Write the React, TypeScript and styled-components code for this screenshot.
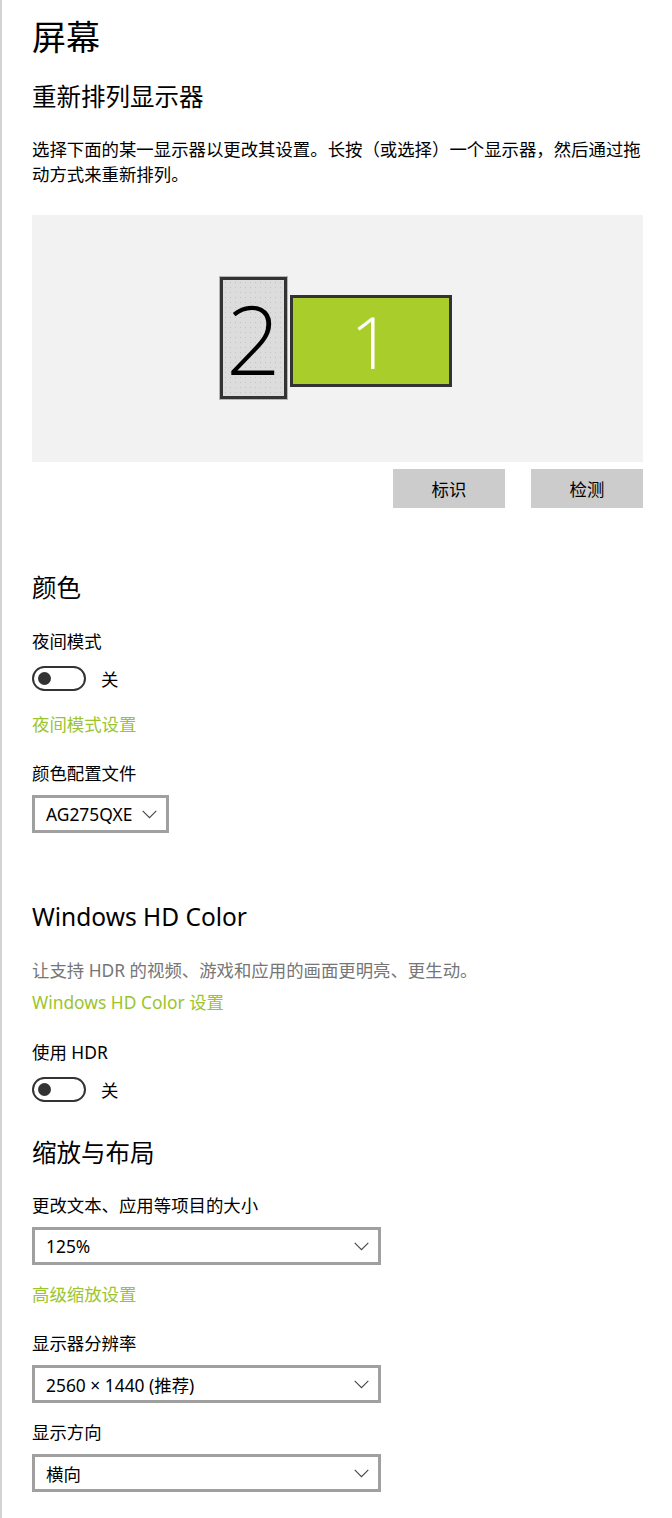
import React from 'react';
import styled, {createGlobalStyle} from 'styled-components';

const GlobalStyle = createGlobalStyle`
    html, body {
        margin: 0;
        padding: 0;
        background: #ffffff;
    }
    body {
        font-family: "Segoe UI", "Noto Sans", "Noto Sans CJK SC", sans-serif;
        color: #000;
    }
`;

const Page = styled.div`
    box-sizing: border-box;
    width: 672px;
    min-height: 1518px;
    border-left: 2px solid #d4d4d4;
    padding: 14px 0 0 30px;
`;

const Title = styled.h1`
    margin: 0;
    font-size: 34px;
    line-height: 46px;
    font-weight: normal;
`;

const SectionTitle = styled.h2<{top: number}>`
    margin: ${p => p.top}px 0 0 0;
    font-size: 24.5px;
    line-height: 32px;
    font-weight: normal;
`;

const Text = styled.div<{top: number; muted?: boolean}>`
    margin-top: ${p => p.top}px;
    font-size: 17.4px;
    line-height: 22px;
    color: ${p => (p.muted ? '#767676' : '#000')};
    white-space: nowrap;
`;

const Description = styled.p`
    margin: 24px 0 0 0;
    font-size: 17.4px;
    line-height: 25px;
    white-space: nowrap;
`;

const Link = styled.a<{top: number}>`
    display: block;
    margin-top: ${p => p.top}px;
    font-size: 17.4px;
    line-height: 22px;
    color: #9cc42c;
    text-decoration: none;
`;

const Canvas = styled.div`
    position: relative;
    margin-top: 28px;
    width: 611px;
    height: 247px;
    background: #f2f2f2;
`;

const Monitor = styled.div<{primary?: boolean}>`
    position: absolute;
    box-sizing: border-box;
    display: flex;
    align-items: center;
    justify-content: center;
    border: 3px solid #333;
    font-family: "Open Sans", "Noto Sans", sans-serif;
    font-weight: 300;
    line-height: 1;
    color: ${p => (p.primary ? '#fff' : '#000')};
    background-color: ${p => (p.primary ? '#a9cd2b' : '#dcdcdc')};
    background-image: ${p =>
        p.primary ? 'none' : 'radial-gradient(#c4c4c4 0.6px, transparent 0.8px)'};
    background-size: 5px 5px;
    outline: ${p => (p.primary ? 'none' : '1px solid #b4b4b4')};
`;

const ButtonRow = styled.div`
    display: flex;
    justify-content: flex-end;
    gap: 26px;
    width: 611px;
    margin-top: 7px;
`;

const Button = styled.button`
    width: 112px;
    height: 39px;
    border: none;
    background: #cccccc;
    font-family: inherit;
    font-size: 17.4px;
    color: #000;
    padding: 0;
`;

const ToggleRow = styled.div`
    display: flex;
    align-items: center;
    gap: 15px;
    margin-top: 14px;
`;

const Toggle = styled.div`
    box-sizing: border-box;
    width: 54px;
    height: 25px;
    border: 2.5px solid #333;
    border-radius: 13px;
    display: flex;
    align-items: center;
    padding-left: 4px;
`;

const Knob = styled.span`
    width: 13px;
    height: 13px;
    border-radius: 50%;
    background: #333;
`;

const ToggleLabel = styled.span`
    font-size: 17.4px;
    line-height: 22px;
`;

const Select = styled.div<{width: number}>`
    box-sizing: border-box;
    display: flex;
    align-items: center;
    justify-content: space-between;
    width: ${p => p.width}px;
    height: 38px;
    margin-top: 11px;
    border: 3px solid #a0a0a0;
    padding: 0 9px 0 11px;
    font-size: 17.4px;
    background: #fff;
`;

const Chevron = () => (
    <svg width="15" height="9" viewBox="0 0 15 9">
        <path d="M0.7 0.9 L7.5 7.7 L14.3 0.9" fill="none" stroke="#444" strokeWidth="1.1" />
    </svg>
);

export default function App() {
    return (
        <Page>
            <GlobalStyle />
            <Title>屏幕</Title>
            <SectionTitle top={21}>重新排列显示器</SectionTitle>
            <Description>
                选择下面的某一显示器以更改其设置。长按（或选择）一个显示器，然后通过拖
                <br />
                动方式来重新排列。
            </Description>
            <Canvas>
                <Monitor style={{left: 188, top: 62, width: 67, height: 122, fontSize: 96}}>2</Monitor>
                <Monitor primary style={{left: 258, top: 80, width: 162, height: 92, fontSize: 72}}>1</Monitor>
            </Canvas>
            <ButtonRow>
                <Button>标识</Button>
                <Button>检测</Button>
            </ButtonRow>

            <SectionTitle top={64}>颜色</SectionTitle>
            <Text top={26}>夜间模式</Text>
            <ToggleRow>
                <Toggle><Knob /></Toggle>
                <ToggleLabel>关</ToggleLabel>
            </ToggleRow>
            <Link top={22}>夜间模式设置</Link>
            <Text top={27}>颜色配置文件</Text>
            <Select width={137}>
                <span>AG275QXE</span>
                <Chevron />
            </Select>

            <SectionTitle top={68}>Windows HD Color</SectionTitle>
            <Text top={26} muted>让支持 HDR 的视频、游戏和应用的画面更明亮、更生动。</Text>
            <Link top={10}>Windows HD Color 设置</Link>
            <Text top={28}>使用 HDR</Text>
            <ToggleRow>
                <Toggle><Knob /></Toggle>
                <ToggleLabel>关</ToggleLabel>
            </ToggleRow>

            <SectionTitle top={35}>缩放与布局</SectionTitle>
            <Text top={25}>更改文本、应用等项目的大小</Text>
            <Select width={349}>
                <span>125%</span>
                <Chevron />
            </Select>
            <Link top={18}>高级缩放设置</Link>
            <Text top={27}>显示器分辨率</Text>
            <Select width={349}>
                <span>2560 × 1440 (推荐)</span>
                <Chevron />
            </Select>
            <Text top={18}>显示方向</Text>
            <Select width={349}>
                <span>横向</span>
                <Chevron />
            </Select>
        </Page>
    );
}
